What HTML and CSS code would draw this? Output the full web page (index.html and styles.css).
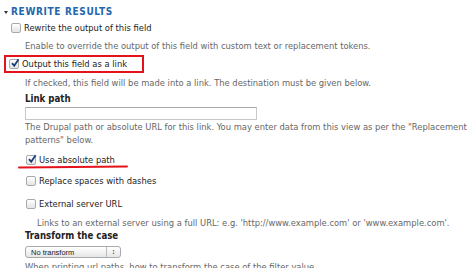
FILE: index.html
```html
<!DOCTYPE html>
<html>
<head>
<meta charset="utf-8">
<link rel="stylesheet" href="styles.css">
</head>
<body>
<div class="panel">
  <div class="legend"><span class="tri"></span>REWRITE RESULTS</div>

  <div class="opt top"><span class="cb"></span><span class="lbl">Rewrite the output of this field</span></div>
  <div class="desc d1">Enable to override the output of this field with custom text or replacement tokens.</div>

  <div class="opt boxed"><span class="cb on"><svg viewBox="0 0 10 10" width="10" height="10"><path d="M2 5.2 L4.2 7.8 L8.6 1.2" fill="none" stroke="#1d3f78" stroke-width="1.8"/></svg></span><span class="lbl">Output this field as a link</span></div>
  <div class="desc d2">If checked, this field will be made into a link. The destination must be given below.</div>

  <div class="nested">
    <div class="title t1">Link path</div>
    <div class="input"></div>
    <div class="desc d3">The Drupal path or absolute URL for this link. You may enter data from this view as per the "Replacement patterns" below.</div>

    <div class="opt sub abs"><span class="cb on"><svg viewBox="0 0 10 10" width="10" height="10"><path d="M2 5.2 L4.2 7.8 L8.6 1.2" fill="none" stroke="#1d3f78" stroke-width="1.8"/></svg></span><span class="lbl">Use absolute path</span><span class="uline"></span></div>
    <div class="opt sub rep"><span class="cb"></span><span class="lbl">Replace spaces with dashes</span></div>
    <div class="opt sub ext"><span class="cb"></span><span class="lbl">External server URL</span></div>
    <div class="desc d4">Links to an external server using a full URL: e.g. 'http://www.example.com' or 'www.example.com'.</div>

    <div class="title t2">Transform the case</div>
    <div class="select"><span class="stext">No transform</span><span class="sarrow">&#8597;</span></div>
    <div class="desc d5">When printing url paths, how to transform the case of the filter value.</div>
  </div>
</div>
</body>
</html>
```
FILE: styles.css
```css
html, body {
  margin: 0;
  padding: 0;
  background: #fff;
}
body {
  width: 474px;
  height: 268px;
  overflow: hidden;
  font-family: "DejaVu Sans Condensed", "DejaVu Sans", sans-serif;
  font-size: 9.3px;
  color: #333;
}
.panel {
  padding-top: 5px;
}
.legend {
  height: 14px;
  line-height: 14px;
  padding-left: 4px;
  display: flex;
  align-items: center;
  font-weight: bold;
  color: #2467ad;
  font-size: 10px;
  letter-spacing: 0.65px;
}
.tri {
  width: 0;
  height: 0;
  border-left: 2.5px solid transparent;
  border-right: 2.5px solid transparent;
  border-top: 3px solid #333;
  margin-right: 3px;
}
.opt {
  height: 14px;
  line-height: 14px;
  display: flex;
  align-items: center;
  color: #222;
}
.opt.top {
  margin-top: 2px;
  padding-left: 11px;
}
.cb {
  width: 8px;
  height: 8px;
  border: 1px solid #aaa;
  border-radius: 2px;
  background: linear-gradient(#fff, #e4e4e4);
  margin-right: 3px;
  position: relative;
  flex: none;
}
.cb.on svg {
  position: absolute;
  left: 0;
  top: -2px;
}
.desc {
  line-height: 13px;
  color: #666;
  padding-left: 25px;
}
.d1 { margin-top: 4px; }
.boxed {
  margin-top: 3px;
  margin-left: 4px;
  width: 133px;
  height: 14px;
  border: 2px solid #e3121b;
  padding-left: 3px;
}
.d2 { margin-top: 3px; }
.nested {
  padding-left: 25px;
}
.nested .desc {
  padding-left: 0;
}
.title {
  font-weight: bold;
  font-size: 9.6px;
  height: 14px;
  line-height: 14px;
  color: #222;
}
.t1 { margin-top: 3px; }
.input {
  margin-top: 1px;
  width: 230px;
  height: 11px;
  border: 1px solid #c8c8c8;
  border-top-color: #aaa;
}
.d3 {
  width: 450px;
}
.sub {
  padding-left: 1px;
}
.abs {
  margin-top: 7px;
  position: relative;
}
.uline {
  position: absolute;
  left: -7px;
  top: 13px;
  width: 110px;
  height: 2px;
  background: #e3121b;
  border-radius: 1px;
  transform: rotate(-0.5deg);
}
.rep { margin-top: 7px; }
.ext { margin-top: 9px; }
.d4 {
  margin-top: 5px;
  padding-left: 12px !important;
}
.t2 { margin-top: 0; }
.select {
  margin-top: 3px;
  width: 94px;
  height: 10px;
  border: 1px solid #aaa;
  border-radius: 3px;
  background: linear-gradient(#fff, #e6e6e6);
  display: flex;
  align-items: center;
  font-size: 7.5px;
  font-family: "Liberation Sans", sans-serif;
  color: #222;
}
.stext {
  flex: 1;
  padding-left: 5px;
}
.sarrow {
  width: 13px;
  border-left: 1px solid #bbb;
  text-align: center;
  font-size: 7px;
  line-height: 10px;
}
.d5 { margin-top: 2px; }
```
